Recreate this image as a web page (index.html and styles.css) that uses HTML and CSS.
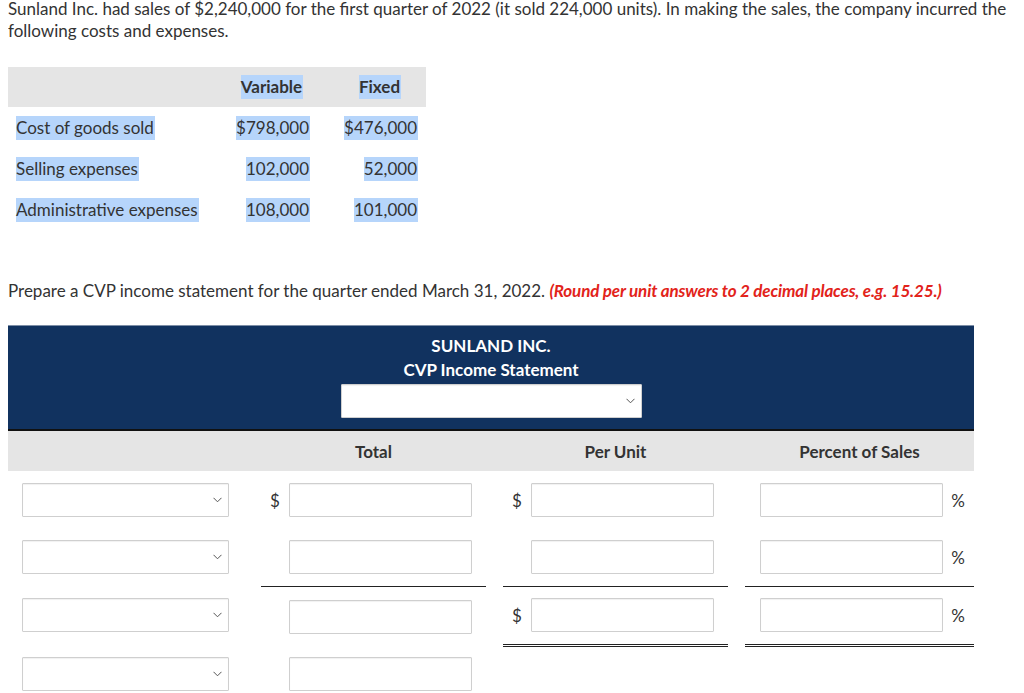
FILE: index.html
```html
<!DOCTYPE html>
<html lang="en">
<head>
<meta charset="utf-8">
<title>CVP Income Statement</title>
<link rel="stylesheet" href="styles.css">
</head>
<body>
<p class="intro">Sunland Inc. had sales of $2,240,000 for the first quarter of 2022 (it sold 224,000 units). In making the sales, the company incurred the following costs and expenses.</p>

<div class="costs">
  <div class="costs-row costs-head">
    <div class="c-label"></div>
    <div class="c-center"><span class="sel">Variable</span></div>
    <div class="c-center"><span class="sel">Fixed</span></div>
  </div>
  <div class="costs-row">
    <div class="c-label"><span class="sel">Cost of goods sold</span></div>
    <div class="c-num"><span class="sel">$798,000</span></div>
    <div class="c-num"><span class="sel">$476,000</span></div>
  </div>
  <div class="costs-row">
    <div class="c-label"><span class="sel">Selling expenses</span></div>
    <div class="c-num"><span class="sel">102,000</span></div>
    <div class="c-num"><span class="sel">52,000</span></div>
  </div>
  <div class="costs-row">
    <div class="c-label"><span class="sel">Administrative expenses</span></div>
    <div class="c-num"><span class="sel">108,000</span></div>
    <div class="c-num"><span class="sel">101,000</span></div>
  </div>
</div>

<p class="prompt">Prepare a CVP income statement for the quarter ended March 31, 2022. <em class="hint">(Round per unit answers to 2 decimal places, e.g. 15.25.)</em></p>

<div class="statement">
  <div class="st-title">
    <div class="st-line">SUNLAND INC.</div>
    <div class="st-line">CVP Income Statement</div>
    <div class="select select-wide"><svg class="chev" width="9" height="6" viewBox="0 0 9 6"><path d="M0.5 0.8 L4.5 4.8 L8.5 0.8" fill="none" stroke="#555" stroke-width="1"/></svg></div>
  </div>
  <div class="st-row st-head">
    <div></div>
    <div class="h-cell">Total</div>
    <div class="h-cell">Per Unit</div>
    <div class="h-cell">Percent of Sales</div>
  </div>

  <div class="st-row r1">
    <div class="lab"><div class="select"><svg class="chev" width="9" height="6" viewBox="0 0 9 6"><path d="M0.5 0.8 L4.5 4.8 L8.5 0.8" fill="none" stroke="#555" stroke-width="1"/></svg></div></div>
    <div class="val"><span class="pre">$</span><span class="inp"></span></div>
    <div class="val"><span class="pre">$</span><span class="inp"></span></div>
    <div class="val pct"><span class="inp"></span><span class="suf">%</span></div>
  </div>

  <div class="st-row r2">
    <div class="lab"><div class="select"><svg class="chev" width="9" height="6" viewBox="0 0 9 6"><path d="M0.5 0.8 L4.5 4.8 L8.5 0.8" fill="none" stroke="#555" stroke-width="1"/></svg></div></div>
    <div class="val line"><span class="pre"></span><span class="inp"></span></div>
    <div class="val line"><span class="pre"></span><span class="inp"></span></div>
    <div class="val pct line"><span class="inp"></span><span class="suf">%</span></div>
  </div>

  <div class="st-row r3">
    <div class="lab"><div class="select"><svg class="chev" width="9" height="6" viewBox="0 0 9 6"><path d="M0.5 0.8 L4.5 4.8 L8.5 0.8" fill="none" stroke="#555" stroke-width="1"/></svg></div></div>
    <div class="val"><span class="pre"></span><span class="inp"></span></div>
    <div class="val dbl"><span class="pre">$</span><span class="inp"></span></div>
    <div class="val pct dbl"><span class="inp"></span><span class="suf">%</span></div>
  </div>

  <div class="st-row r4">
    <div class="lab"><div class="select"><svg class="chev" width="9" height="6" viewBox="0 0 9 6"><path d="M0.5 0.8 L4.5 4.8 L8.5 0.8" fill="none" stroke="#555" stroke-width="1"/></svg></div></div>
    <div class="val"><span class="pre"></span><span class="inp"></span></div>
    <div></div>
    <div></div>
  </div>
</div>
</body>
</html>
```

FILE: styles.css
```css
html, body {
  background: #fff;
}
body {
  margin: 0 8px;
  font-family: Lato, "Open Sans", sans-serif;
  font-size: 17px;
  color: #333;
  overflow: hidden;
}
.intro {
  margin: -2px 0 0;
  line-height: 22px;
}

/* cost table */
.costs {
  margin-top: 25px;
  width: 418px;
}
.costs-row {
  display: grid;
  grid-template-columns: 202px 92px 92px;
  column-gap: 16px;
  height: 41px;
  align-items: center;
}
.costs-head {
  background: #e5e5e5;
  height: 40px;
  font-weight: 700;
}
.c-label { padding: 0 8px; white-space: nowrap; }
.c-center { text-align: center; }
.c-num { text-align: right; padding: 0 8px; }
.sel {
  display: inline-block;
  line-height: 24px;
  background: #b6d5fb;
  padding-right: 1px;
}

.prompt {
  margin: 49px 0 0;
  line-height: 24px;
}
.hint {
  color: #e2231a;
  font-weight: 700;
  font-style: italic;
  letter-spacing: -0.15px;
}

/* statement */
.statement {
  margin-top: 22px;
  width: 966px;
}
.st-title {
  background: #11325f;
  border-top: 1px solid #7d8ea6;
  border-bottom: 2px solid #111;
  padding: 8px 0 11px;
  display: flex;
  flex-direction: column;
  align-items: center;
  color: #fff;
}
.st-line {
  font-weight: 700;
  line-height: 24px;
}
.select {
  box-sizing: border-box;
  height: 34px;
  width: 207px;
  background: #fff;
  border: 1px solid #cfcfcf;
  border-radius: 1px;
  box-shadow: inset 0 1px 1px rgba(0,0,0,0.06);
  display: flex;
  align-items: center;
  justify-content: flex-end;
  padding-right: 6px;
}
.select-wide {
  width: 301px;
  margin-top: 2px;
}
.chev { display: block; }

.st-row {
  display: grid;
  grid-template-columns: 236px 225px 225px 229px;
  column-gap: 17px;
}
.st-head {
  background: #e5e5e5;
  height: 40px;
  align-items: center;
  font-weight: 700;
}
.h-cell { text-align: center; }

.lab { padding-left: 14px; }
.val {
  display: flex;
  align-items: center;
}
.pre {
  width: 28px;
  text-align: center;
  flex: none;
}
.inp {
  box-sizing: border-box;
  width: 183px;
  height: 34px;
  border: 1px solid #cfcfcf;
  border-radius: 1px;
  box-shadow: inset 0 1px 1px rgba(0,0,0,0.06);
  background: #fff;
  flex: none;
}
.pct { padding-left: 15px; }
.suf {
  width: 30px;
  text-align: center;
  flex: none;
}

.r1 > div { padding-top: 12px; padding-bottom: 11px; }
.r2 > div { padding-top: 12px; padding-bottom: 12px; }
.r3 > div { padding-top: 11px; padding-bottom: 12px; }
.r4 > div { padding-top: 10px; padding-bottom: 12px; }
.line { border-bottom: 1px solid #222; }
.dbl { border-bottom: 3px double #222; }
```
